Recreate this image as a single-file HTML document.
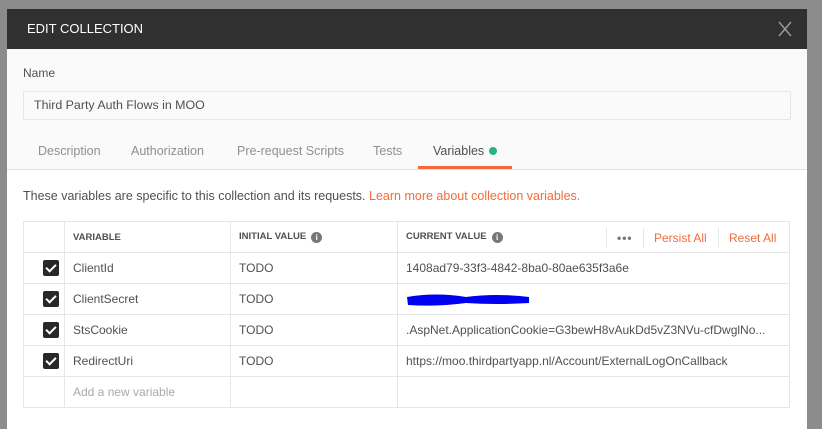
<!DOCTYPE html>
<html><head><style>
*{box-sizing:border-box;margin:0;padding:0}
body{width:822px;height:421px;overflow:hidden;background:#8c8c8c;font-family:"Liberation Sans",sans-serif;position:relative}
.m{position:absolute;left:7px;top:9px;width:800px;height:420px;background:#fff}
.hd{height:40px;background:#303030;color:#fff;font-size:13px;line-height:40px;padding-left:20px}
.x{position:absolute;right:14px;top:12px;width:16px;height:16px}
.top{background:#fafafa;height:121px;position:relative;border-bottom:1px solid #e2e2e2}
.lbl{position:absolute;left:16px;top:17px;font-size:12px;color:#505050}
.inp{position:absolute;left:16px;top:42px;width:768px;height:29px;border:1px solid #e6e6e6;border-radius:2px;background:#fafafa;font-size:12.4px;color:#505050;line-height:27px;padding-left:10px}
.tab{position:absolute;top:95px;font-size:12.5px;color:#8f8f8f}
.ul{position:absolute;left:411px;top:117px;width:94px;height:3px;background:#f26b3a}
.dot{display:inline-block;width:8px;height:8px;border-radius:50%;background:#26b47f;margin-left:5px;vertical-align:0}
.info{position:absolute;left:16px;top:180px;font-size:12.5px;color:#505050}
.info span{color:#f26b3a}
table{position:absolute;left:16px;top:212px;border-collapse:collapse;width:767px;font-size:12px;color:#505050}
td{border:1px solid #e6e6e6;height:31px;padding-left:8px;white-space:nowrap;overflow:hidden}
th{border:1px solid #e6e6e6;height:31px;text-align:left;padding-left:8px;font-size:9.5px;color:#505050;font-weight:bold}
.i{display:inline-block;width:11px;height:11px;border-radius:50%;background:#777;color:#fff;font-size:8px;text-align:center;line-height:11px;margin-left:5px;vertical-align:-1px}
.cb{display:inline-block;width:16px;height:16px;background:#282828;border-radius:2px;position:relative;margin-left:19px;vertical-align:middle}
.cb:after{content:"";position:absolute;left:5px;top:2px;width:4px;height:8px;border:solid #fff;border-width:0 2px 2px 0;transform:rotate(45deg)}
.o{color:#f26b3a;font-size:12px;font-weight:normal}
</style></head><body>
<div class="m">
<div class="hd">EDIT COLLECTION
<svg class="x" viewBox="0 0 16 16"><path d="M2 1L14 15M14 1L2 15" stroke="#999" stroke-width="1.5"/></svg></div>
<div class="top">
<div class="lbl">Name</div>
<div class="inp">Third Party Auth Flows in MOO</div>
<div class="tab" style="left:31px">Description</div>
<div class="tab" style="left:124px">Authorization</div>
<div class="tab" style="left:230px">Pre-request Scripts</div>
<div class="tab" style="left:366px">Tests</div>
<div class="tab" style="left:426px;color:#505050">Variables<span class="dot"></span></div>
<div class="ul"></div>
</div>
<div class="info">These variables are specific to this collection and its requests. <span>Learn more about collection variables.</span></div>
<table>
<tr><th style="width:41px"></th><th style="width:166px">VARIABLE</th><th style="width:167px">INITIAL VALUE<span class="i">i</span></th><th style="position:relative">CURRENT VALUE<span class="i">i</span>
<span style="position:absolute;left:208px;top:6px;height:20px;border-left:1px solid #e6e6e6;padding-left:10px;line-height:20px;font-size:12px;color:#777;letter-spacing:1px">•••</span>
<span class="o" style="position:absolute;left:245px;top:6px;height:20px;line-height:20px;border-left:1px solid #e6e6e6;padding-left:10px">Persist All</span>
<span class="o" style="position:absolute;left:320px;top:6px;height:20px;line-height:20px;border-left:1px solid #e6e6e6;padding-left:10px">Reset All</span></th></tr>
<tr><td style="padding:0"><span class="cb"></span></td><td>ClientId</td><td>TODO</td><td>1408ad79-33f3-4842-8ba0-80ae635f3a6e</td></tr>
<tr><td style="padding:0"><span class="cb"></span></td><td>ClientSecret</td><td>TODO</td><td><svg width="130" height="16" style="vertical-align:middle"><path d="M1 6Q30 1 60 6Q90 2 123 6L123 12Q90 14 60 12Q30 16 2 14Z" fill="#0000f0"/></svg></td></tr>
<tr><td style="padding:0"><span class="cb"></span></td><td>StsCookie</td><td>TODO</td><td>.AspNet.ApplicationCookie=G3bewH8vAukDd5vZ3NVu-cfDwglNo...</td></tr>
<tr><td style="padding:0"><span class="cb"></span></td><td>RedirectUri</td><td>TODO</td><td>https://moo.thirdpartyapp.nl/Account/ExternalLogOnCallback</td></tr>
<tr><td></td><td style="color:#aaa">Add a new variable</td><td></td><td></td></tr>
</table>
</div>
</body></html>
